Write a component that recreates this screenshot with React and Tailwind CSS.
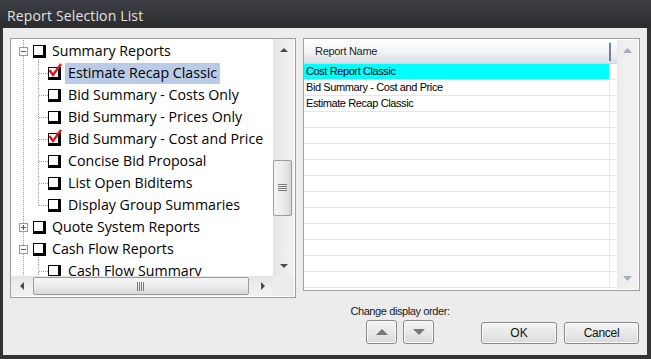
import React from "react";

const TREE = [
  { level: 0, exp: "minus", label: "Summary Reports", hasKids: true },
  { level: 1, checked: true, label: "Estimate Recap Classic", selected: true },
  { level: 1, label: "Bid Summary - Costs Only" },
  { level: 1, label: "Bid Summary - Prices Only" },
  { level: 1, checked: true, label: "Bid Summary - Cost and Price" },
  { level: 1, label: "Concise Bid Proposal" },
  { level: 1, label: "List Open Biditems" },
  { level: 1, label: "Display Group Summaries", last: true },
  { level: 0, exp: "plus", label: "Quote System Reports" },
  { level: 0, exp: "minus", label: "Cash Flow Reports", hasKids: true },
  { level: 1, label: "Cash Flow Summary" },
];

const LIST = ["Cost Report Classic", "Bid Summary - Cost and Price", "Estimate Recap Classic"];

const DOT = { stroke: "#a0a0a0", strokeWidth: 1, strokeDasharray: "1 1" };

function Checkbox({ cx, cy, checked }) {
  return (
    <g>
      <rect x={cx} y={cy} width={13} height={13} fill="#000" />
      <rect x={cx + 1} y={cy + 1} width={9} height={9} fill="#fff" />
      {checked && (
        <polyline
          points={`${cx + 1.5},${cy + 3} ${cx + 5},${cy + 8} ${cx + 13},${cy - 3}`}
          fill="none"
          stroke="#e3121b"
          strokeWidth={2.4}
          strokeLinejoin="miter"
        />
      )}
    </g>
  );
}

function TreeRow({ row }) {
  const w = row.level === 0 ? 38 : 54;
  return (
    <div className="h-[22px] flex items-center whitespace-nowrap">
      <svg width={w} height={22} className="shrink-0 block">
        {row.level === 0 ? (
          <>
            <line x1={12.5} y1={0} x2={12.5} y2={8} {...DOT} />
            <line x1={12.5} y1={16} x2={12.5} y2={22} {...DOT} />
            <rect x={8.5} y={7.5} width={8} height={8} fill="#fbfbfb" stroke="#8f9bb3" strokeWidth={1} />
            <line x1={10} y1={11.5} x2={15} y2={11.5} stroke="#3b5a96" strokeWidth={1} />
            {row.exp === "plus" && (
              <line x1={12.5} y1={9} x2={12.5} y2={14} stroke="#3b5a96" strokeWidth={1} />
            )}
            {row.hasKids && <line x1={27.5} y1={19} x2={27.5} y2={22} {...DOT} />}
            <Checkbox cx={22} cy={5} />
          </>
        ) : (
          <>
            <line x1={12.5} y1={0} x2={12.5} y2={22} {...DOT} />
            <line x1={27.5} y1={0} x2={27.5} y2={row.last ? 12 : 22} {...DOT} />
            <line x1={28} y1={11.5} x2={37} y2={11.5} {...DOT} />
            <Checkbox cx={37} cy={5} checked={row.checked} />
          </>
        )}
      </svg>
      <span
        className={`h-[21px] flex items-center px-[3px] text-[14.2px] text-black ${row.selected ? "bg-[#b9cbe7]" : ""}`}
        style={{ fontFamily: '"Open Sans", sans-serif' }}
      >
        {row.label}
      </span>
    </div>
  );
}

function Grip({ vertical }) {
  return vertical ? (
    <svg width={9} height={8} className="block">
      {[0, 2, 4, 6].map((y) => (
        <line key={y} x1={0} y1={y + 0.5} x2={9} y2={y + 0.5} stroke="#7c7c7c" />
      ))}
    </svg>
  ) : (
    <svg width={8} height={9} className="block">
      {[0, 2, 4, 6].map((x) => (
        <line key={x} x1={x + 0.5} y1={0} x2={x + 0.5} y2={9} stroke="#7c7c7c" />
      ))}
    </svg>
  );
}

function Tri({ dir, color, w = 8, h = 4 }) {
  const pts = {
    up: `0,${h} ${w / 2},0 ${w},${h}`,
    down: `0,0 ${w / 2},${h} ${w},0`,
  };
  if (dir === "left" || dir === "right") {
    const p = dir === "left" ? `${h},0 0,${w / 2} ${h},${w}` : `0,0 ${h},${w / 2} 0,${w}`;
    return (
      <svg width={h} height={w} className="block">
        <polygon points={p} fill={color} />
      </svg>
    );
  }
  return (
    <svg width={w} height={h} className="block">
      <polygon points={pts[dir]} fill={color} />
    </svg>
  );
}

function Button({ children, className = "" }) {
  return (
    <div
      className={`border border-[#8a8a8a] rounded-[3px] bg-gradient-to-b from-[#f3f3f3] via-[#e9e9e9] to-[#d9d9d9] shadow-[inset_0_0_0_1px_#fbfbfb] flex items-center justify-center ${className}`}
    >
      {children}
    </div>
  );
}

export default function App() {
  const small = { fontFamily: '"Liberation Sans", Arial, sans-serif' };
  return (
    <div className="w-[651px] h-[359px] flex flex-col bg-[#333333] overflow-hidden">
      <div
        className="h-[28px] shrink-0 flex items-center pl-[7px] pt-[2px] text-[14px] tracking-[0.15px] text-[#e2e2e2] bg-gradient-to-b from-[#3e4047] to-[#2c2c2c]"
        style={{ fontFamily: '"Open Sans", sans-serif' }}
      >
        Report Selection List
      </div>
      <div className="flex-1 ml-[3px] mr-[4px] mb-[4px] bg-[#ececec] flex items-start pt-[10px] pl-[7px]">
        {/* Tree panel */}
        <div className="w-[286px] h-[260px] shrink-0 border border-[#a0a0a0] bg-white flex flex-col pr-[1px] pb-[1px]">
          <div className="flex h-[237px]">
            <div className="w-[262px] overflow-hidden pt-[1px]">
              {TREE.map((r, i) => (
                <TreeRow key={i} row={r} />
              ))}
            </div>
            <div className="w-[21px] flex flex-col bg-gradient-to-r from-[#e4e4e4] via-[#eeeeee] to-[#f1f1f1]">
              <div className="h-[21px] flex items-center justify-center pl-[1px]">
                <Tri dir="up" color="#4a4a4a" w={8} h={4} />
              </div>
              <div className="flex-1">
                <div className="mt-[100px] h-[56px] w-[19px] border border-[#9c9c9c] rounded-[2px] bg-gradient-to-r from-[#f5f5f5] via-[#ececec] to-[#d8d8d8] flex items-center justify-center">
                  <Grip vertical />
                </div>
              </div>
              <div className="h-[21px] flex items-center justify-center pl-[1px]">
                <Tri dir="down" color="#4a4a4a" w={8} h={4} />
              </div>
            </div>
          </div>
          <div className="flex h-[20px]">
            <div className="w-[262px] flex bg-gradient-to-b from-[#e4e4e4] via-[#eeeeee] to-[#f1f1f1]">
              <div className="w-[21px] flex items-center justify-center">
                <Tri dir="left" color="#4a4a4a" w={8} h={4} />
              </div>
              <div className="flex-1 pt-[1px]">
                <div className="ml-[1px] w-[216px] h-[18px] border border-[#9c9c9c] rounded-[2px] bg-gradient-to-b from-[#f5f5f5] via-[#ececec] to-[#d8d8d8] flex items-center justify-center">
                  <Grip />
                </div>
              </div>
              <div className="w-[21px] flex items-center justify-center">
                <Tri dir="right" color="#4a4a4a" w={8} h={4} />
              </div>
            </div>
            <div className="w-[21px] bg-[#ececec]" />
          </div>
        </div>

        {/* Right column */}
        <div className="w-[337px] ml-[7px] flex flex-col" style={small}>
          <div className="h-[253px] border border-[#a0a0a0] bg-white flex pt-[1px] pr-[1px] pb-[1px]">
            <div className="w-[313px] flex flex-col overflow-hidden">
              <div className="h-[24px] shrink-0 flex items-center border-b border-[#d2d5dc] bg-gradient-to-b from-[#ffffff] via-[#f2f3f5] to-[#dcdfe6]">
                <div className="w-[305px] pl-[11px] text-[11px] tracking-[-0.3px] text-[#1e1e1e]">Report Name</div>
                <div className="w-[2px] h-[18px] bg-[#767b98]" />
              </div>
              {Array.from({ length: 14 }).map((_, i) => (
                <div key={i} className="h-[16px] shrink-0 flex border-b border-[#e6e6e6]">
                  <div
                    className={`w-[306px] border-r border-[#e6e6e6] pl-[2px] text-[11px] leading-[15px] tracking-[-0.4px] text-black whitespace-nowrap ${i === 0 ? "bg-[#00ffff]" : ""}`}
                  >
                    {LIST[i] || ""}
                  </div>
                </div>
              ))}
            </div>
            <div className="w-[21px] flex flex-col justify-between bg-gradient-to-r from-[#ebebeb] via-[#f0f0f0] to-[#f3f3f3]">
              <div className="h-[21px] flex items-center justify-center">
                <Tri dir="up" color="#a3abcb" w={9} h={5} />
              </div>
              <div className="h-[21px] flex items-center justify-center">
                <Tri dir="down" color="#a3abcb" w={9} h={5} />
              </div>
            </div>
          </div>
          <div className="flex items-end mt-[13px]">
            <div className="ml-[46px] w-[102px] flex flex-col items-center">
              <div className="text-[11px] leading-[14px] tracking-[-0.4px] text-[#1a1a1a] whitespace-nowrap">
                Change display order:
              </div>
              <div className="mt-[2px] flex gap-[6px]">
                <Button className="w-[31px] h-[24px]">
                  <Tri dir="up" color="#757575" w={12} h={6} />
                </Button>
                <Button className="w-[31px] h-[24px]">
                  <Tri dir="down" color="#757575" w={12} h={6} />
                </Button>
              </div>
            </div>
            <Button className="ml-[30px] w-[76px] h-[22px] text-[12px] text-[#111]">OK</Button>
            <Button className="ml-[7px] w-[75px] h-[22px] text-[12px] tracking-[-0.3px] text-[#111]">Cancel</Button>
          </div>
        </div>
      </div>
    </div>
  );
}
